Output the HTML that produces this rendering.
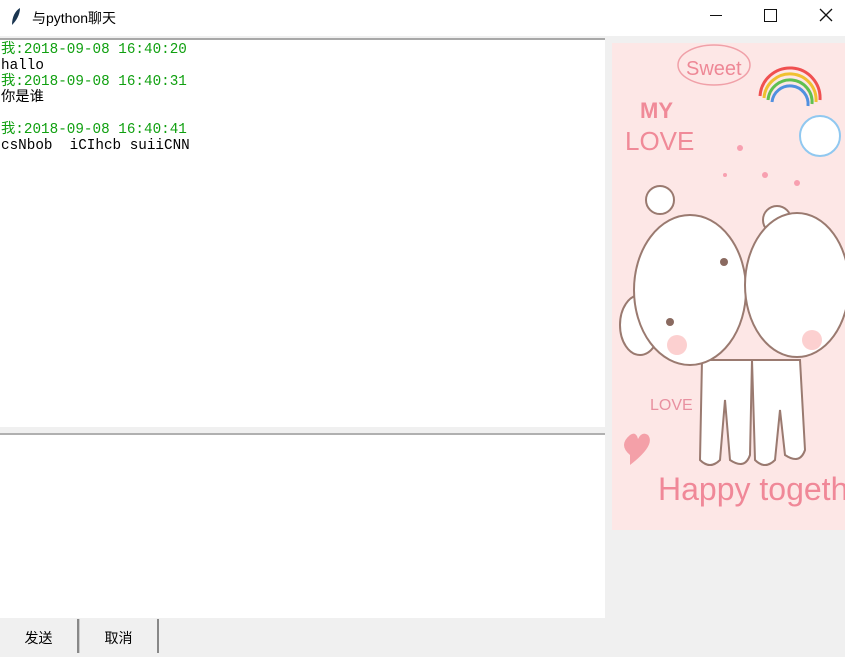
<!DOCTYPE html>
<html><head><meta charset="utf-8"><style>
body{margin:0;width:845px;height:651px;overflow:hidden;background:#f0f0f0;font-family:"Liberation Sans","Noto Sans CJK SC",sans-serif;position:relative}
.title{position:absolute;left:0;top:0;width:845px;height:36px;background:#fff}
.title span{position:absolute;left:32px;top:8px;font-size:14px;color:#000}
#out{position:absolute;left:0;top:38px;width:605px;height:389px;background:#fff;border-top:2px solid #a8a8a8;font-family:"Liberation Mono","Noto Sans CJK SC",monospace;font-size:14.3px;line-height:16px;padding-top:2px;box-sizing:border-box;padding-left:1px;white-space:pre}
.g{color:#10a010}
#in{position:absolute;left:0;top:433px;width:605px;height:183px;background:#fff;border-top:2px solid #b0b0b0}
.btn{position:absolute;top:619px;height:34px;width:77px;border-right:2px solid #888;border-left:1px solid #ccc;background:#f0f0f0;font-size:14px;text-align:center;line-height:38px}
</style></head><body>
<div class="title">
<svg style="position:absolute;left:9px;top:7px" width="14" height="20"><path d="M11 1 C6 4 3 10 3 18 C7 14 11 8 11 1Z" fill="#1a3550"/></svg>
<span>与python聊天</span>
<div style="position:absolute;left:710px;top:15px;width:12px;height:1px;background:#111"></div>
<div style="position:absolute;left:764px;top:9px;width:11px;height:11px;border:1px solid #111"></div>
<svg style="position:absolute;left:819px;top:8px" width="14" height="14"><path d="M1 1L13 13M13 1L1 13" stroke="#111" stroke-width="1.3"/></svg>
</div>
<div id="out"><span class="g">我:2018-09-08 16:40:20</span>
hallo
<span class="g">我:2018-09-08 16:40:31</span>
你是谁

<span class="g">我:2018-09-08 16:40:41</span>
csNbob  iCIhcb suiiCNN</div>
<div id="in"></div>
<div class="btn" style="left:0;border-left:none">发送</div>
<div class="btn" style="left:79px">取消</div>
<svg style="position:absolute;left:612px;top:43px" width="233" height="487" viewBox="612 43 233 487">
<rect x="612" y="43" width="233" height="487" fill="#fde7e6"/>
<ellipse cx="714" cy="65" rx="36" ry="20" fill="none" stroke="#f0a0a8" stroke-width="1.5"/>
<text x="686" y="75" font-size="20" fill="#ee8896" font-family="Liberation Sans">Sweet</text>
<path d="M760 96 A30 30 0 0 1 820 100" fill="none" stroke="#f05050" stroke-width="3"/>
<path d="M764 98 A26 26 0 0 1 816 102" fill="none" stroke="#f0c030" stroke-width="3"/>
<path d="M768 100 A22 22 0 0 1 812 104" fill="none" stroke="#60c050" stroke-width="3"/>
<path d="M772 102 A18 18 0 0 1 808 106" fill="none" stroke="#5090e0" stroke-width="3"/>
<circle cx="820" cy="136" r="20" fill="#fff" stroke="#90c8f0" stroke-width="2"/>
<text x="640" y="118" font-size="22" fill="#f08a98" font-weight="bold" font-family="Liberation Sans">MY</text>
<text x="625" y="150" font-size="26" fill="#f08a98" font-family="Liberation Sans">LOVE</text>
<g fill="#f8a0b0"><circle cx="740" cy="148" r="3"/><circle cx="765" cy="175" r="3"/><circle cx="797" cy="183" r="3"/><circle cx="725" cy="175" r="2"/></g>
<g fill="#fff" stroke="#9a7a70" stroke-width="2">
<circle cx="660" cy="200" r="14"/><circle cx="777" cy="220" r="14"/>
<ellipse cx="640" cy="325" rx="20" ry="30"/>
<path d="M702 360 L700 460 Q710 470 720 460 L725 400 L730 460 Q745 470 750 455 L752 360Z"/>
<path d="M752 360 L755 460 Q765 470 775 460 L780 410 L785 455 Q800 465 805 450 L800 360Z"/>
<ellipse cx="690" cy="290" rx="56" ry="75"/>
<ellipse cx="797" cy="285" rx="52" ry="72"/>
</g>
<circle cx="677" cy="345" r="10" fill="#fcd0d0"/><circle cx="812" cy="340" r="10" fill="#fcd0d0"/>
<circle cx="724" cy="262" r="4" fill="#8a6a60"/><circle cx="670" cy="322" r="4" fill="#8a6a60"/>
<text x="650" y="410" font-size="16" fill="#e890a0" font-family="Liberation Sans">LOVE</text>
<path d="M630 455 q-12 -10 0 -20 q6 -4 8 4 q4 -8 10 -4 q8 10 -18 30z" fill="#f4a0a8"/>
<text x="658" y="500" font-size="32" fill="#f08898" font-family="Liberation Sans">Happy togeth</text>
</svg>
</body></html>
